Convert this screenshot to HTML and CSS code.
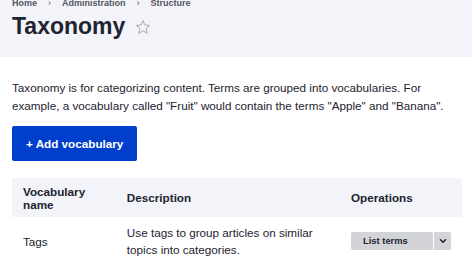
FILE: index.html
```html
<!DOCTYPE html>
<html lang="en">
<head>
  <meta charset="UTF-8" />
  <title>Taxonomy</title>
  <link rel="stylesheet" href="styles.css">
</head>
<body>
  <div class="page-header">
    <ol class="breadcrumb">
      <li>Home</li>
      <li class="sep">&#8250;</li>
      <li>Administration</li>
      <li class="sep">&#8250;</li>
      <li>Structure</li>
    </ol>
    <h1 class="page-title">
      Taxonomy
      <svg class="star" width="16" height="16" viewBox="0 0 24 24">
        <path d="M12 2.5l2.9 6.6 7.1.6-5.4 4.7 1.6 7-6.2-3.7-6.2 3.7 1.6-7L2 9.7l7.1-.6z" fill="none" stroke="#9c9ca6" stroke-width="1.3" stroke-linejoin="round"/>
      </svg>
    </h1>
  </div>

  <main class="content">
    <p class="help">Taxonomy is for categorizing content. Terms are grouped into vocabularies. For example, a vocabulary called "Fruit" would contain the terms "Apple" and "Banana".</p>

    <a class="button-primary">+ Add vocabulary</a>

    <table class="vocab-table">
      <thead>
        <tr>
          <th class="col-name">Vocabulary name</th>
          <th class="col-desc">Description</th>
          <th class="col-ops">Operations</th>
        </tr>
      </thead>
      <tbody>
        <tr>
          <td>Tags</td>
          <td>Use tags to group articles on similar topics into categories.</td>
          <td>
            <div class="dropbutton">
              <span class="dropbutton-action">List terms</span>
              <span class="dropbutton-toggle">
                <svg width="8" height="6" viewBox="0 0 8 6">
                  <path d="M1 1.2l3 3 3-3" fill="none" stroke="#222330" stroke-width="1.5"/>
                </svg>
              </span>
            </div>
          </td>
        </tr>
      </tbody>
    </table>
  </main>
</body>
</html>
```

FILE: styles.css
```css
body {
  font-family: "Liberation Sans", Arial, sans-serif;
  color: #222330;
  background: #fff;
  margin: 0;
  padding: 0;
  font-size: 11.7px;
}

.page-header {
  background: #f3f4f9;
  margin-top: -4px;
  margin-right: 2px;
  padding: 0 12px 15px;
}

.breadcrumb {
  list-style: none;
  margin: 0;
  padding: 0;
  display: flex;
  gap: 11px;
  font-size: 9px;
  font-weight: bold;
  line-height: 14px;
  color: #545560;
}

.breadcrumb .sep {
  font-weight: normal;
}

.page-title {
  margin: 0;
  font-size: 23px;
  line-height: 32px;
  display: flex;
  align-items: center;
  gap: 10px;
}

.star {
  margin-top: 1px;
}

.content {
  padding: 0 12px;
}

.help {
  margin: 22px 0 12px;
  line-height: 17.5px;
  max-width: 440px;
}

.button-primary {
  display: inline-block;
  background: #003ecc;
  color: #fff;
  font-weight: bold;
  line-height: 35px;
  padding: 0 14px 0 14px;
  border-radius: 2px;
}

.vocab-table {
  width: 450px;
  margin-top: 17px;
  border-collapse: collapse;
}

.vocab-table th {
  background: #f3f4f9;
  text-align: left;
  font-weight: bold;
  line-height: 13px;
  height: 39px;
  padding: 0 11px;
}

.vocab-table td {
  padding: 7px 11px 9px;
  line-height: 17px;
  vertical-align: middle;
}

.col-name {
  width: 82px;
}

.col-desc {
  width: 203px;
}

.dropbutton {
  display: flex;
  width: 100px;
  height: 18px;
  font-size: 9.4px;
  font-weight: bold;
}

.dropbutton-action {
  flex: 1;
  background: #d3d4d9;
  border-radius: 2px 0 0 2px;
  line-height: 18px;
  padding-left: 12px;
}

.dropbutton-toggle {
  width: 17px;
  margin-left: 1px;
  background: #d3d4d9;
  border-radius: 0 2px 2px 0;
  display: flex;
  align-items: center;
  justify-content: center;
}
```
